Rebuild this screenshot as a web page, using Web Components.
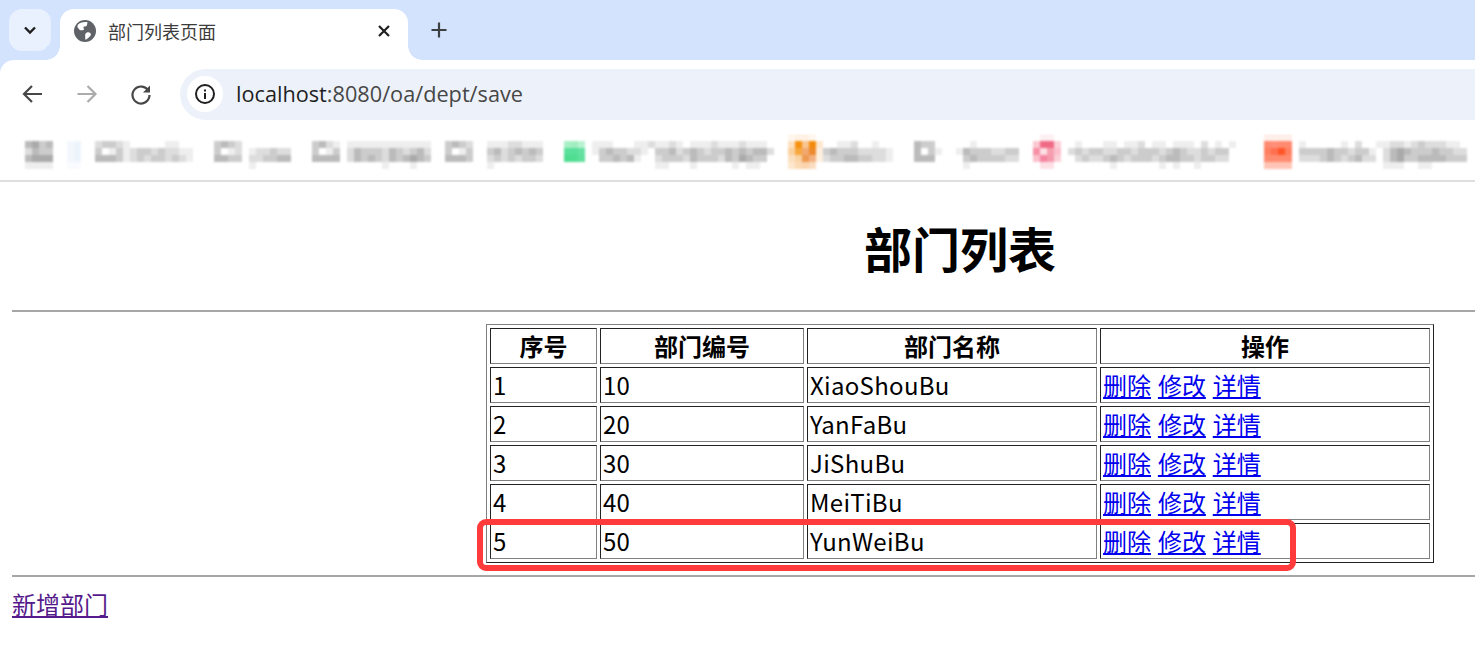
<!DOCTYPE html>
<html lang="zh">
<head>
<meta charset="utf-8">
<title>部门列表页面</title>
<style>
  html, body { margin: 0; overflow: hidden; background: #fff; height: 100%; }
  body { font-family: "Noto Sans CJK SC", sans-serif; }
</style>
</head>
<body>
<browser-tabstrip title-text="部门列表页面"></browser-tabstrip>
<browser-toolbar url-host="localhost" url-rest=":8080/oa/dept/save"></browser-toolbar>
<bookmark-mosaic></bookmark-mosaic>
<dept-page heading="部门列表">
  <dept-table></dept-table>
  <a slot="footer" href="#">新增部门</a>
</dept-page>
<script>
(() => {
  const depts = [
    { no: 1, code: 10, name: 'XiaoShouBu' },
    { no: 2, code: 20, name: 'YanFaBu' },
    { no: 3, code: 30, name: 'JiShuBu' },
    { no: 4, code: 40, name: 'MeiTiBu' },
    { no: 5, code: 50, name: 'YunWeiBu' }
  ]

  class BrowserTabstrip extends HTMLElement {
    constructor() {
      super()
      const shadowRoot = this.attachShadow({ mode: 'open' })
      shadowRoot.innerHTML = `
      <style>
        :host {
          display: flex;
          align-items: flex-end;
          height: 60px;
          padding-left: 9px;
          box-sizing: border-box;
          background: #d3e3fd;
          font-family: "Noto Sans CJK SC", sans-serif;
        }
        .menu {
          width: 42px;
          height: 42px;
          margin-bottom: 9px;
          border-radius: 13px;
          background: #e9f0fe;
          display: flex;
          align-items: center;
          justify-content: center;
        }
        .tab {
          position: relative;
          width: 348px;
          height: 51px;
          margin-left: 9px;
          border-radius: 14px 14px 0 0;
          background: #fff;
          display: flex;
          align-items: center;
          padding: 0 16px 7px 13px;
          box-sizing: border-box;
        }
        .tab::before, .tab::after {
          content: '';
          position: absolute;
          bottom: 0;
          width: 14px;
          height: 14px;
        }
        .tab::before { left: -14px; background: radial-gradient(circle at 0 0, #d3e3fd 13.5px, #fff 14px); }
        .tab::after { right: -14px; background: radial-gradient(circle at 100% 0, #d3e3fd 13.5px, #fff 14px); }
        .title {
          flex: 1;
          margin-left: 11px;
          font-size: 18px;
          line-height: 24px;
          color: #3c3c3c;
        }
        .add {
          margin: 0 0 9px 22px;
          width: 24px;
          height: 42px;
          display: flex;
          align-items: center;
        }
      </style>
      <div class="menu">
        <svg width="16" height="16" viewBox="0 0 16 16"><path d="M3 5.500 8 10.500 13 5.500" fill="none" stroke="#1f1f1f" stroke-width="2.400"/></svg>
      </div>
      <div class="tab">
        <svg width="24" height="24" viewBox="0 0 24 24"><circle cx="12" cy="12" r="11" fill="#5f6368"/><path d="M5 5.500C8 3 12 2.600 14.500 3.200L14 6c-.2 1.400-1.600 1.400-2.800 1.600-.8.2-1 1-.6 1.600.8 1 .2 2-1 2H7.500C6 11 5.300 9 4.300 7.500zM14 13.500c1.800-.6 3.500.2 3.800 1.500.2 1.200-.3 2-1.300 2.800-1.500 1.200-2.500 2.500-4 3-.6-1.300 0-2.600-.3-3.800-.3-1.300.3-3 1.800-3.500z" fill="#fff"/></svg>
        <span class="title">${this.getAttribute('title-text')}</span>
        <svg width="16" height="16" viewBox="0 0 16 16"><path d="M3 3 13 13M13 3 3 13" stroke="#1f1f1f" stroke-width="2.200"/></svg>
      </div>
      <div class="add">
        <svg width="18" height="18" viewBox="0 0 18 18"><path d="M9 1.500V16.500M1.500 9H16.500" stroke="#3c4043" stroke-width="2.200"/></svg>
      </div>
      `
    }
  }
  customElements.define('browser-tabstrip', BrowserTabstrip)

  class BrowserToolbar extends HTMLElement {
    constructor() {
      super()
      const shadowRoot = this.attachShadow({ mode: 'open' })
      shadowRoot.innerHTML = `
      <style>
        :host {
          display: block;
          background: #d3e3fd;
        }
        .bar {
          display: flex;
          align-items: center;
          height: 74px;
          padding: 0 0 6px 15px;
          box-sizing: border-box;
          background: #fff;
          border-radius: 14px 0 0 0;
        }
        .nav {
          display: flex;
          gap: 18px;
          margin-right: 21px;
        }
        svg.btn { width: 36px; height: 36px; display: block; }
        .omnibox {
          flex: 1;
          height: 51px;
          border-radius: 26px 0 0 26px;
          background: #edf2fa;
          display: flex;
          align-items: center;
          padding-left: 7px;
        }
        .info {
          width: 36px;
          height: 36px;
          border-radius: 50%;
          background: #fff;
          display: flex;
          align-items: center;
          justify-content: center;
          margin-right: 13px;
        }
        .url {
          font-family: "Open Sans", sans-serif;
          font-size: 21.7px;
          line-height: 30px;
          color: #474747;
          white-space: nowrap;
        }
        .url b { font-weight: 400; color: #1f1f1f; }
      </style>
      <div class="bar">
        <div class="nav">
          <svg class="btn" viewBox="0 0 36 36"><path d="M27 18H9.500M17 10 9 18 17 26" fill="none" stroke="#474747" stroke-width="2.200"/></svg>
          <svg class="btn" viewBox="0 0 36 36"><path d="M8.500 18H26M18.500 10 26.500 18 18.500 26" fill="none" stroke="#ababab" stroke-width="2.200"/></svg>
          <svg class="btn" viewBox="0 0 36 36"><path d="M25.500 15A8.500 8.500 0 1 0 26.500 19" fill="none" stroke="#474747" stroke-width="2.200"/><path d="M27 9.500V16.500H20z" fill="#474747"/></svg>
        </div>
        <div class="omnibox">
          <div class="info">
            <svg width="22" height="22" viewBox="0 0 22 22"><circle cx="11" cy="11" r="9" fill="none" stroke="#1f1f1f" stroke-width="2"/><rect x="10" y="10" width="2" height="6" fill="#1f1f1f"/><rect x="10" y="6.500" width="2" height="2" fill="#1f1f1f"/></svg>
          </div>
          <span class="url"><b>${this.getAttribute('url-host')}</b>${this.getAttribute('url-rest')}</span>
        </div>
      </div>
      `
    }
  }
  customElements.define('browser-toolbar', BrowserToolbar)

  // the bookmarks are pixelated out in the reference, so this is a 7px mosaic
  const CELL = 7
  const blocks = [
    [0, '....', 'bacb', 'dbcc', 'baaa', 'eeee'],
    [10, '..............', 'dccde.....ee..', 'cfecedccdcddee', 'bbbcedcdccdcde', '......ffffff..'],
    [27, '...........', 'cbcd.ff....', 'cfed.eddcdd', 'bbcc.ddccbb', '.....ef....'],
    [41, '.................', 'cbde.eeeeeeeeeeee', 'cfec.dbcccdbcdcbd', 'bbbb.dbcbcdbcbabc', '.....fffffefffeff'],
    [60, '..............', 'cbcd.feeeddeee', 'cfec.fcbdcbcbc', 'bbbc.fdcdcdccd', '.....feffffff.'],
    [81, '..........................', 'eee..feedeedefeeedeeedeee.', 'ecbccdde.ccbdcbcdccbcbcbbd', 'fccbcbe..dcccdbcccdbcabccf', '.......ffeefffefffffefeef.'],
    [114, '..........', '.feedffe..', 'cbcccdddde', 'dccbbccdde', '..ff......'],
    [127, '...............', 'bcc.....ef.....', 'bfce..ebcccddcc', 'bbb...fcbccccdd', '......fef......'],
    [149, '........................', '.e..feefeedfeefeeefdfefe', 'dcdccddccdcccdcbcddcdccf', 'fdcddcbcdcccdcbbccdccddf', '..ffffe..ffffefeffeff...'],
    [182, '........................', 'ef....efdf.eeddedcdddee.', 'ccccbccdccefdbabcccbccdd', 'dddcbcdcbddfdbaccbbbbccc', '...........feeeffeeff...']
  ]
  const colorBlocks = [
    [6, [null, null], ['#f3f7fd', '#eef4fc'], ['#f3f7fd', '#eef4fc'], ['#f3f7fd', '#eef4fc'], ['#f9fbfe', '#f9fbfe']],
    [77, [null, null, null], ['#a8efc6', '#a0eec0', '#b8f2d2'], ['#5be09c', '#58df99', '#64e1a2'], ['#4ddc90', '#50dd92', '#5fe09d'], [null, null, null]],
    [109, ['#fff7ee', '#fff2e4', '#fff2e4', '#fff7ee', null], ['#fde0bf', '#f5920f', '#f9c58f', '#f28a0a', '#fde8d0'], ['#fad09f', '#f6a73c', '#f2a971', '#ee8a2e', '#fdeedd'], ['#fbe0c0', '#fad3a5', '#ee9a50', '#f3b283', '#fef0e0'], ['#fde6cc', '#fbd9b5', '#fbd3ac', '#fbdcc0', null]],
    [144, [null, '#fdf0f3', '#fdf0f3', null], ['#fbc8d2', '#f06a85', '#f06a85', '#fbd0d8'], ['#f78fa5', '#fde0e6', '#f6a0b0', '#fbc0cc'], ['#fbc0cc', '#f585a0', '#f59aad', '#fad0d8'], [null, '#fde0e6', '#fde0e6', null]],
    [177, ['#ffefea', '#ffefea', '#ffefea', '#ffefea'], ['#ff8a70', '#ff8f78', '#ff8a70', '#ff8a70'], ['#ff8060', '#ff7050', '#ff5528', '#ff8060'], ['#ff8c70', '#ff8c70', '#ff8c70', '#ff8c70'], ['#ffc4b5', '#ffc4b5', '#ffc4b5', '#ffc4b5']]
  ]

  class BookmarkMosaic extends HTMLElement {
    constructor() {
      super()
      const shadowRoot = this.attachShadow({ mode: 'open' })
      const rect = (col, row, fill) => `<rect x="${col * CELL}" y="${row * CELL}" width="${CELL}" height="${CELL}" fill="${fill}"/>`
      let cells = ''
      blocks.forEach(([start, ...rows]) => {
        rows.forEach((line, row) => {
          [...line].forEach((ch, i) => {
            if (ch !== '.') cells += rect(start + i, row, `#${ch}${ch}${ch}`)
          })
        })
      })
      colorBlocks.forEach(([start, ...rows]) => {
        rows.forEach((line, row) => {
          line.forEach((c, i) => {
            if (c) cells += rect(start + i, row, c)
          })
        })
      })
      shadowRoot.innerHTML = `
      <style>
        :host {
          display: block;
          height: 48px;
          padding-left: 25px;
          box-sizing: border-box;
          border-bottom: 2px solid #dedede;
          overflow: hidden;
          background: #fff;
        }
        svg { display: block; filter: blur(.8px); }
      </style>
      <svg width="1450" height="35" viewBox="0 0 1450 35">${cells}</svg>
      `
    }
  }
  customElements.define('bookmark-mosaic', BookmarkMosaic)

  class DeptTable extends HTMLElement {
    constructor() {
      super()
      const shadowRoot = this.attachShadow({ mode: 'open' })
      shadowRoot.innerHTML = `
      <style>
        :host {
          display: block;
          position: relative;
          width: 948px;
          margin: 0 auto;
        }
        table {
          width: 948px;
          table-layout: fixed;
          border-collapse: separate;
          border-spacing: 3px;
          border: 1px solid;
          border-color: #808080 #222 #222 #808080;
          box-sizing: border-box;
        }
        th, td {
          height: 36px;
          box-sizing: border-box;
          padding: 0 2px;
          border: 1px solid;
          border-color: #222 #808080 #808080 #222;
          line-height: 34px;
          font-size: 24px;
          font-weight: 400;
          text-align: left;
          white-space: nowrap;
          overflow: hidden;
          letter-spacing: .3px;
          word-spacing: 1.2px;
        }
        th { font-weight: 700; text-align: center; letter-spacing: 0; }
        td a { letter-spacing: 0; }
        a { color: #0000ee; }
        .mark {
          position: absolute;
          left: -9px;
          top: 195px;
          width: 819px;
          height: 52px;
          box-sizing: border-box;
          border: 6px solid #ff3b3b;
          border-radius: 9px;
        }
      </style>
      <table>
        <colgroup><col style="width:107px"><col style="width:204px"><col style="width:290px"><col style="width:330px"></colgroup>
        <thead><tr><th>序号</th><th>部门编号</th><th>部门名称</th><th>操作</th></tr></thead>
        <tbody>
        ${depts.map(d => `<tr><td>${d.no}</td><td>${d.code}</td><td>${d.name}</td><td><a href="#">删除</a> <a href="#">修改</a> <a href="#">详情</a></td></tr>`).join('')}
        </tbody>
      </table>
      <div class="mark"></div>
      `
    }
  }
  customElements.define('dept-table', DeptTable)

  class DeptPage extends HTMLElement {
    constructor() {
      super()
      const shadowRoot = this.attachShadow({ mode: 'open' })
      shadowRoot.innerHTML = `
      <style>
        :host {
          display: block;
          width: 1896px;
          padding-left: 12px;
          color: #000;
          font-family: "Noto Sans CJK SC", sans-serif;
        }
        h1 {
          margin: 35px 0 33px;
          font-size: 48px;
          line-height: 60px;
          font-weight: 700;
          text-align: center;
        }
        hr {
          margin: 0;
          border: 0;
          height: 2px;
          background: #a6a6a6;
        }
        .body { padding: 12px 0; }
        .foot { padding-top: 9px; font-size: 24px; line-height: 36px; }
        ::slotted(a) { color: #551a8b; }
      </style>
      <h1>${this.getAttribute('heading')}</h1>
      <hr>
      <div class="body"><slot></slot></div>
      <hr>
      <div class="foot"><slot name="footer"></slot></div>
      `
    }
  }
  customElements.define('dept-page', DeptPage)
})()
</script>
</body>
</html>
